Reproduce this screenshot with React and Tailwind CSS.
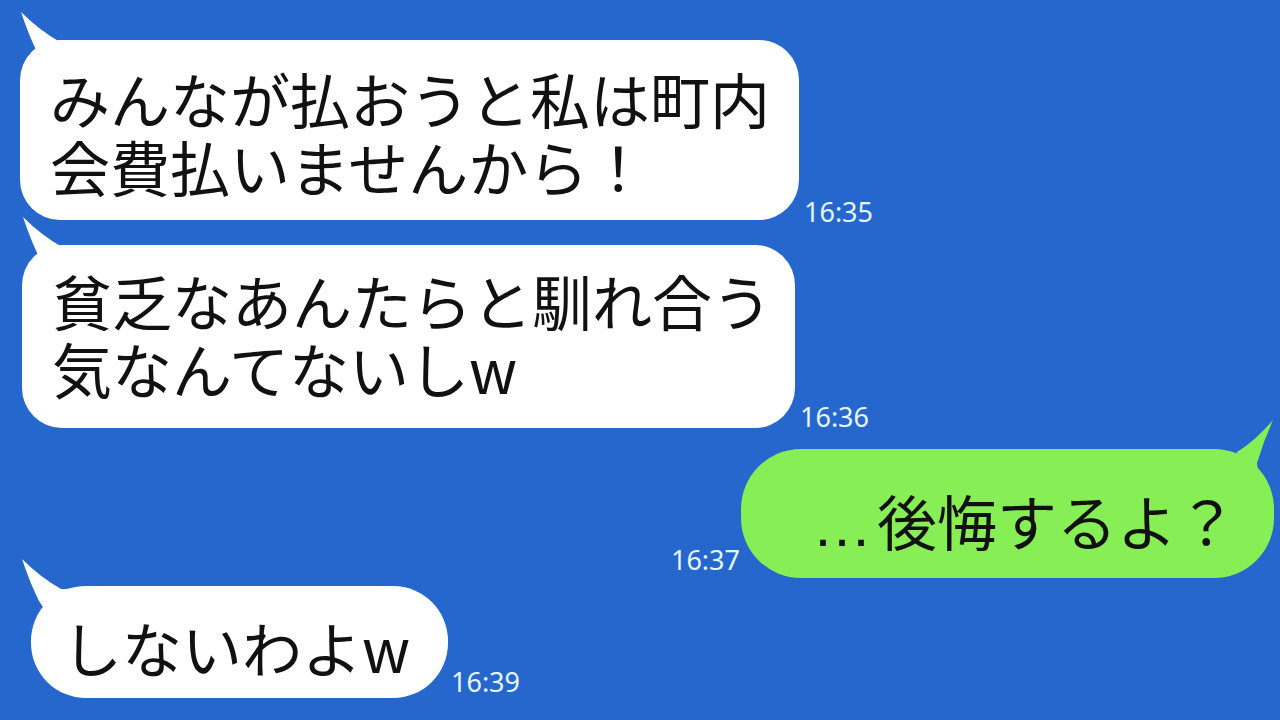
const jp = "font-['Noto_Sans_CJK_JP',sans-serif]";
const stamp = "font-['Noto_Sans',sans-serif] text-[27px] leading-[27px] text-[#e6f6ff] shrink-0";

function TailLeft({ className }) {
  return (
    <svg className={`absolute w-[60px] h-[60px] ${className}`} viewBox="0 0 60 60">
      <path d="M1 0 Q 9 24 18 42 L 30 60 L 60 60 L 60 30 L 40 30 Q 19 18 1 0 Z" fill="#ffffff" />
    </svg>
  );
}

function TailRight() {
  return (
    <svg className="absolute left-[469px] top-[-29px] w-[64px] h-[80px]" viewBox="0 0 64 80">
      <path d="M63 0 Q 46 20 27 32 L 20 60 L 50 70 L 47 43 Q 54 20 63 0 Z" fill="#87ee55" />
    </svg>
  );
}

export default function App() {
  return (
    <div className={`w-full h-[720px] bg-[#2567cc] overflow-hidden flex flex-col text-[#111] ${jp}`}>
      {/* 1 */}
      <div className="flex items-end gap-[5px] ml-[20px] mt-[40px]">
        <div className="relative w-[779px] h-[180px] bg-white rounded-[40px] pl-[30px] pt-[24px] text-[60px] leading-[68px]">
          <TailLeft className="left-0 top-[-28px]" />
          <p className="relative">みんなが払おうと私は町内</p>
          <p className="relative">会費払いませんから！</p>
        </div>
        <span className={`${stamp} mb-[-5px]`}>16:35</span>
      </div>

      {/* 2 */}
      <div className="flex items-end gap-[5px] ml-[22px] mt-[25px]">
        <div className="relative w-[773px] h-[183px] bg-white rounded-[40px] pl-[30px] pt-[21px] text-[60px] leading-[68px]">
          <TailLeft className="left-0 top-[-28px]" />
          <p className="relative">貧乏なあんたらと馴れ合う</p>
          <p className="relative">気なんてないしw</p>
        </div>
        <span className={`${stamp} mb-[-2px]`}>16:36</span>
      </div>

      {/* 3 */}
      <div className="flex items-end justify-end gap-[1px] mr-[6px] mt-[21px]">
        <span className={`${stamp} mb-[5px]`}>16:37</span>
        <div className="relative w-[533px] h-[129px] bg-[#87ee55] rounded-[60px] pl-[71px] pt-[37px] text-[60px] leading-[68px]">
          <TailRight />
          <p className="relative">
            <span className="font-['Liberation_Sans',sans-serif] mr-[5px]">…</span>後悔するよ？
          </p>
        </div>
      </div>

      {/* 4 */}
      <div className="flex items-end gap-[3px] ml-[31px] mt-[8px]">
        <div className="relative w-[417px] h-[112px] bg-white rounded-[55px] pl-[31px] pt-[27px] text-[60px] leading-[68px]">
          <TailLeft className="left-[-10px] top-[-27px]" />
          <p className="relative">しないわよw</p>
        </div>
        <span className={`${stamp} mb-[3px]`}>16:39</span>
      </div>
    </div>
  );
}
